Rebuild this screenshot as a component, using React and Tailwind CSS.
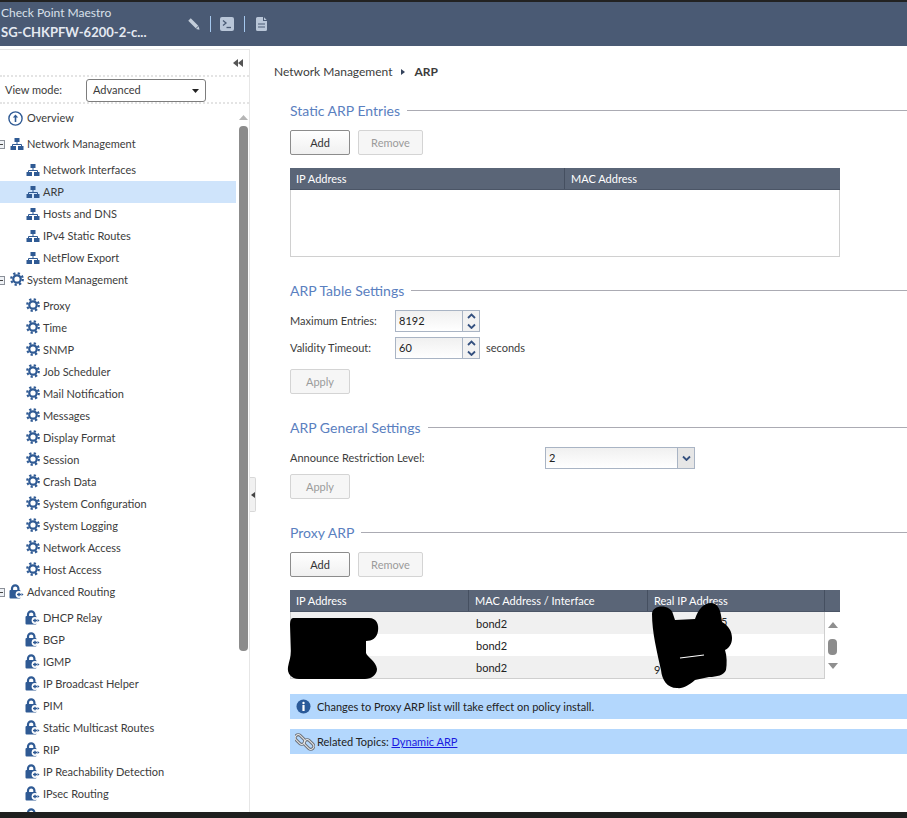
import React from 'react';

const SYSTEM_ITEMS = ['Proxy', 'Time', 'SNMP', 'Job Scheduler', 'Mail Notification', 'Messages', 'Display Format', 'Session', 'Crash Data', 'System Configuration', 'System Logging', 'Network Access', 'Host Access'];
const NETWORK_ITEMS = ['Network Interfaces', 'ARP', 'Hosts and DNS', 'IPv4 Static Routes', 'NetFlow Export'];
const ROUTING_ITEMS = ['DHCP Relay', 'BGP', 'IGMP', 'IP Broadcast Helper', 'PIM', 'Static Multicast Routes', 'RIP', 'IP Reachability Detection', 'IPsec Routing'];

const BLUE = '#2f5a94';

function NetworkIcon() {
  return (
    <svg width="14" height="14" viewBox="0 0 14 14" className="shrink-0">
      <rect x="4.5" y="1" width="5" height="4" fill={BLUE} />
      <path d="M7 5v2.5M2.5 9.5V7.5h9v2" fill="none" stroke={BLUE} strokeWidth="1" />
      <rect x="0.5" y="9" width="5.5" height="4" fill={BLUE} />
      <rect x="8" y="9" width="5.5" height="4" fill={BLUE} />
    </svg>
  );
}

function GearIcon() {
  return (
    <svg width="14" height="14" viewBox="0 0 15 15" className="shrink-0 -mt-[2px]">
      <circle cx="7.5" cy="7.5" r="6.2" fill="none" stroke={BLUE} strokeWidth="2.4" strokeDasharray="2.4 2.47" />
      <circle cx="7.5" cy="7.5" r="4" fill="#fff" stroke={BLUE} strokeWidth="2.4" />
    </svg>
  );
}

function LockIcon() {
  return (
    <svg width="15" height="15" viewBox="0 0 15 15" className="shrink-0 -mt-[2px]">
      <path d="M3 7V4.5a3.2 3.2 0 0 1 6.4 0V7" fill="none" stroke={BLUE} strokeWidth="2.2" />
      <rect x="0.5" y="6" width="11" height="8.5" rx="1" fill={BLUE} />
      <circle cx="10" cy="10.5" r="3.4" fill="#fff" />
      <path d="M8 10.5h4M10 8.8v3.4" stroke={BLUE} strokeWidth="1.4" />
      <path d="M12.5 9l2 1.5-2 1.5z" fill={BLUE} />
    </svg>
  );
}

function OverviewIcon() {
  return (
    <svg width="15" height="15" viewBox="0 0 15 15" className="shrink-0">
      <circle cx="7.5" cy="7.5" r="6.6" fill="none" stroke={BLUE} strokeWidth="1.4" />
      <path d="M7.5 11V5" stroke={BLUE} strokeWidth="1.6" />
      <path d="M4.8 6.4L7.5 3.4l2.7 3z" fill={BLUE} />
    </svg>
  );
}

function Expander() {
  return (
    <svg width="6" height="9" viewBox="0 0 6 9" className="shrink-0">
      <rect x="-3.5" y="0.5" width="8" height="8" fill="#eef1f5" stroke="#8a8f98" />
      <path d="M-2 4.5h5" stroke="#444" />
    </svg>
  );
}

function Group({ icon, label, items, selected }) {
  return (
    <>
      <div className="flex h-[22px] mb-[4px] items-center">
        <Expander />
        <span className="ml-[3px] w-[15px] flex justify-center">{icon}</span>
        <span className="ml-[3px]">{label}</span>
      </div>
      {items.map((item) => (
        <div key={item} className={`flex h-[22px] items-center pl-[25px] w-[236px] ${item === selected ? 'bg-[#cfe4fb]' : ''}`}>
          <span className="w-[15px] flex justify-center">{icon}</span>
          <span className="ml-[3px]">{item}</span>
        </div>
      ))}
    </>
  );
}

function Sidebar() {
  return (
    <aside className="relative w-[250px] shrink-0 mt-[3px] border-t border-r border-[#e6e6e6] flex flex-col overflow-hidden">
      <div className="h-[27px] flex justify-end items-center pr-[6px] border-b-2 border-dotted border-[#e4e4e4]">
        <svg width="10" height="8" viewBox="0 0 10 8"><path d="M5 0v8L0 4zM10 0v8L5 4z" fill="#555" /></svg>
      </div>
      <div className="h-[27px] flex items-center pl-[5px] pt-[2px] border-b-2 border-dotted border-[#e4e4e4]">
        <span className="w-[81px]">View mode:</span>
        <div className="w-[120px] h-[23px] border border-[#7d7d7d] rounded-[3px] flex items-center justify-between pl-[6px] pr-[6px]">
          <span>Advanced</span>
          <svg width="7" height="4" viewBox="0 0 7 4"><path d="M0 0h7L3.5 4z" fill="#222" /></svg>
        </div>
      </div>
      <div className="flex-1 pt-[3px] overflow-hidden">
        <div className="flex h-[22px] mb-[4px] items-center pl-[8px]">
          <OverviewIcon />
          <span className="ml-[4px]">Overview</span>
        </div>
        <Group icon={<NetworkIcon />} label="Network Management" items={NETWORK_ITEMS} selected="ARP" />
        <Group icon={<GearIcon />} label="System Management" items={SYSTEM_ITEMS} />
        <Group icon={<LockIcon />} label="Advanced Routing" items={ROUTING_ITEMS} />
        <div className="flex h-[22px] items-center pl-[25px]"><LockIcon /></div>
      </div>
      {/* scrollbar lies over the tree */}
      <div className="absolute left-[239px] top-[65px] w-[9px] h-[540px]">
        <svg width="9" height="5" viewBox="0 0 9 5" className="absolute top-[0px]"><path d="M4.5 0L9 5H0z" fill="#b5b5b5" /></svg>
        <div className="absolute top-[11px] w-[9px] h-[525px] bg-[#8c8c8c] rounded-[4px]" />
      </div>
    </aside>
  );
}

function Section({ title, className }) {
  return (
    <div className={`flex items-center h-[20px] ${className}`}>
      <span className="text-[14px] text-[#5a80c0] -mt-[2px]">{title}</span>
      <div className="flex-1 h-px bg-[#ababb3] ml-[7px] mb-[2px]" />
    </div>
  );
}

function Btn({ label, disabled, className = '' }) {
  return (
    <button
      type="button"
      className={`h-[25px] pt-[1px] rounded-[2px] border text-center ${disabled ? 'border-[#d4d4d4] bg-[#f6f6f6] text-[#9b9b9b]' : 'border-[#8c8c8c] bg-linear-to-b from-white to-[#f0f0f0] text-[#333]'} ${className}`}
    >
      {label}
    </button>
  );
}

function Spinner({ value }) {
  return (
    <div className="flex h-[22px] w-[85px] border border-[#a9b4c4]">
      <div className="flex-1 pl-[3px] pt-[1px] flex items-center bg-linear-to-b from-[#f0f0f0] to-white text-[#222]">{value}</div>
      <div className="w-[17px] border-l border-[#a9b4c4] flex flex-col">
        {['M1 5l3.5-3.5L8 5', 'M1 1.5L4.5 5 8 1.5'].map((d) => (
          <div key={d} className="flex-1 flex items-center justify-center bg-[#f2f2f2]">
            <svg width="9" height="6" viewBox="0 0 9 6"><path d={d} fill="none" stroke="#34507f" strokeWidth="1.8" /></svg>
          </div>
        ))}
      </div>
    </div>
  );
}

function TableHead({ columns }) {
  return (
    <div className="flex h-[22px] bg-[#5a6577] text-white border-b border-[#4b5566]">
      {columns.map((col, i) => (
        <div key={col.label || i} className={`flex items-center pl-[6px] pt-[2px] border-r border-[#454f60] last:border-r-0 ${col.w}`}>{col.label}</div>
      ))}
    </div>
  );
}

export default function App() {
  return (
    <div className="w-[907px] h-[818px] flex flex-col overflow-hidden bg-white text-[11px] text-[#3c3c3c] font-['Lato','Noto_Sans',sans-serif]">
      <div className="h-[2px] bg-[#222]" />
      <header className="h-[44px] bg-[#4a5a74] flex items-center text-white">
        <div className="w-[187px] pl-[1px] -mt-[3px]">
          <div className="text-[12px] leading-[18px] text-[#d9e0ea]">Check Point Maestro</div>
          <div className="text-[13px] leading-[18px] mt-[1px] font-bold text-[#e4e9f1]">SG-CHKPFW-6200-2-c...</div>
        </div>
        <svg width="14" height="14" viewBox="0 0 14 14">
          <path d="M2.5 2.5L10 10" stroke="#c3cdda" strokeWidth="3.6" />
          <path d="M9 12l3.5.8-.8-3.5z" fill="#c3cdda" />
        </svg>
        <div className="w-px h-[16px] bg-[#a5c8ee] ml-[9px]" />
        <svg width="14" height="14" viewBox="0 0 14 14" className="ml-[9px]">
          <rect width="14" height="14" rx="2" fill="#b9c6d8" />
          <path d="M3 3.5l3 2.5-3 2.5" fill="none" stroke="#4a5a74" strokeWidth="1.3" />
          <path d="M6.5 10.5h4.5" stroke="#4a5a74" strokeWidth="1.3" />
        </svg>
        <div className="w-px h-[16px] bg-[#a5c8ee] ml-[10px]" />
        <svg width="11" height="14" viewBox="0 0 11 14" className="ml-[11px]">
          <path d="M0 1.5A1.5 1.5 0 0 1 1.5 0H7v4h4v8.5a1.5 1.5 0 0 1-1.5 1.5h-8A1.5 1.5 0 0 1 0 12.5zM8 .3L10.7 3H8z" fill="#b9c6d8" />
          <path d="M2 7h7M2 10h7" stroke="#4a5a74" strokeWidth="1.2" />
        </svg>
      </header>

      <div className="flex-1 flex min-h-0">
        <Sidebar />
        <main className="relative flex-1 min-w-0 flex flex-col pl-[40px] overflow-hidden">
          {/* collapse handle sits on the sidebar edge */}
          <div className="absolute left-0 top-[431px] w-[6px] h-[35px] bg-[#f1f1f1] border border-l-0 border-[#d8d8d8] rounded-r-[2px] flex items-center justify-center">
            <svg width="4" height="6" viewBox="0 0 4 6"><path d="M4 0v6L0 3z" fill="#444" /></svg>
          </div>

          <div className="-ml-[16px] mt-[16px] h-[20px] flex items-center text-[12px]">
            <span>Network Management</span>
            <svg width="4" height="6" viewBox="0 0 4 6" className="ml-[9px] mr-[9px]"><path d="M0 0v6l4-3z" fill="#34435c" /></svg>
            <span className="font-bold">ARP</span>
          </div>

          <Section title="Static ARP Entries" className="mt-[19px]" />
          <div className="mt-[9px] flex gap-[8px]">
            <Btn label="Add" className="w-[60px]" />
            <Btn label="Remove" disabled className="w-[65px]" />
          </div>
          <div className="mt-[13px] w-[550px] h-[89px] border-b border-x border-[#d0d0d0]">
            <div className="-mx-px">
              <TableHead columns={[{ label: 'IP Address', w: 'w-[275px]' }, { label: 'MAC Address', w: 'flex-1' }]} />
            </div>
          </div>

          <Section title="ARP Table Settings" className="mt-[24px]" />
          <div className="mt-[9px] flex items-center h-[22px]">
            <span className="w-[105px]">Maximum Entries:</span>
            <Spinner value="8192" />
          </div>
          <div className="mt-[5px] flex items-center h-[22px]">
            <span className="w-[105px]">Validity Timeout:</span>
            <Spinner value="60" />
            <span className="ml-[6px]">seconds</span>
          </div>
          <Btn label="Apply" disabled className="mt-[10px] w-[60px]" />

          <Section title="ARP General Settings" className="mt-[24px]" />
          <div className="mt-[9px] flex items-center h-[22px]">
            <span className="w-[255px]">Announce Restriction Level:</span>
            <div className="flex w-[150px] h-[22px] border border-[#a9b4c4]">
              <div className="flex-1 pl-[3px] pt-[1px] flex items-center bg-linear-to-b from-[#f0f0f0] to-white text-[#222]">2</div>
              <div className="w-[17px] border-l border-[#a9b4c4] bg-[#e6e6e6] flex items-center justify-center">
                <svg width="9" height="6" viewBox="0 0 9 6"><path d="M1 1.5L4.5 5 8 1.5" fill="none" stroke="#34507f" strokeWidth="1.8" /></svg>
              </div>
            </div>
          </div>
          <Btn label="Apply" disabled className="mt-[5px] w-[60px]" />

          <Section title="Proxy ARP" className="mt-[24px]" />
          <div className="mt-[9px] flex gap-[8px]">
            <Btn label="Add" className="w-[60px]" />
            <Btn label="Remove" disabled className="w-[65px]" />
          </div>
          <div className="relative mt-[13px] w-[550px] h-[88px]">
            <TableHead columns={[{ label: 'IP Address', w: 'w-[179px]' }, { label: 'MAC Address / Interface', w: 'w-[179px]' }, { label: 'Real IP Address', w: 'w-[177px]' }, { label: '', w: 'flex-1' }]} />
            <div className="w-[535px] border-r border-b border-l border-[#cfcfcf]">
              {[0, 1, 2].map((row) => (
                <div key={row} className={`h-[22px] flex items-center pt-[3px] ${row === 1 ? 'bg-white' : 'bg-[#f0f0f0]'}`}>
                  <span className="ml-[185px] text-[#222]">bond2</span>
                </div>
              ))}
            </div>
            {/* list scrollbar */}
            <svg width="10" height="6" viewBox="0 0 10 6" className="absolute left-[538px] top-[32px]"><path d="M5 0l5 6H0z" fill="#8f8f8f" /></svg>
            <div className="absolute left-[538px] top-[49px] w-[9px] h-[16px] bg-[#8c8c8c] rounded-[4px]" />
            <svg width="10" height="6" viewBox="0 0 10 6" className="absolute left-[538px] top-[73px]"><path d="M0 0h10L5 6z" fill="#8f8f8f" /></svg>
            {/* redaction scribbles painted over the table */}
            <span className="absolute left-[364px] top-[72px] text-[#222]">9</span>
            <span className="absolute left-[431px] top-[24px] text-[#222]">5</span>
            <svg width="95" height="65" viewBox="0 0 95 65" className="absolute -left-[3px] top-[27px]">
              <path d="M6 1H82C90 1 92 8 91 14C90 21 85 24 79 24L79 36C80 40 89 44 90 52C90 58 84 62 78 62H12C4 62 0 56 1 50C2 44 4 40 4 34L3 8C3 4 4 1 6 1z" fill="#000" />
            </svg>
            <svg width="85" height="90" viewBox="0 0 85 90" className="absolute left-[361px] top-[12px]">
              <path d="M1 12C1 2 20 2 22 12L24 18L44 17C47 8 52 1 60 1C68 1 70 10 71 20C78 24 81 30 81 36C81 42 78 46 74 48C76 54 76 62 75 68C73 73 66 75 58 75L44 78C38 83 32 87 26 86C16 86 11 78 10 68C6 50 1 30 1 12z" fill="#000" />
              <path d="M29 56l24-3" stroke="#fff" strokeWidth="1.2" />
            </svg>
          </div>

          <div className="mt-[16px] h-[25px] bg-[#b3d7fd] flex items-center text-[#222] pl-[6px]">
            <svg width="15" height="15" viewBox="0 0 15 15">
              <circle cx="7.5" cy="7.5" r="7" fill="#2b5a99" />
              <circle cx="7.5" cy="4" r="1.2" fill="#fff" />
              <rect x="6.4" y="6" width="2.2" height="6" fill="#fff" />
            </svg>
            <span className="ml-[6px] mt-[2px]">Changes to Proxy ARP list will take effect on policy install.</span>
          </div>
          <div className="mt-[10px] h-[25px] bg-[#b3d7fd] flex items-center text-[#222] pl-[5px]">
            <svg width="20" height="20" viewBox="0 0 20 20" fill="none">
              <g stroke="#6b6f76" strokeWidth="3">
                <rect x="-0.5" y="4.5" width="11" height="6" rx="3" transform="rotate(45 5 7.5)" />
                <rect x="8.5" y="9.5" width="11" height="6" rx="3" transform="rotate(45 14 12.5)" />
              </g>
              <g stroke="#e8e8e8" strokeWidth="1">
                <rect x="-0.5" y="4.5" width="11" height="6" rx="3" transform="rotate(45 5 7.5)" />
                <rect x="8.5" y="9.5" width="11" height="6" rx="3" transform="rotate(45 14 12.5)" />
              </g>
            </svg>
            <span className="ml-[2px] mt-[2px]">Related Topics: <a href="#dynamic-arp" className="text-[#1a1ae0] underline">Dynamic ARP</a></span>
          </div>
        </main>
      </div>
      <div className="h-[6px] bg-[#1f1f1f]" />
    </div>
  );
}
